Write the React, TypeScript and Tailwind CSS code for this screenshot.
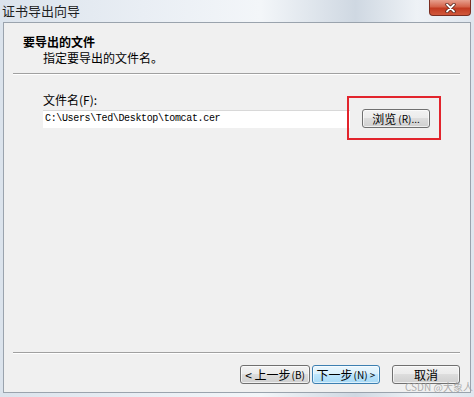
import React from "react";

const cjk = { fontFamily: '"Noto Sans CJK SC", "Liberation Sans", sans-serif' };

function Btn({ children, primary, w }: { children: React.ReactNode; primary?: boolean; w: string }) {
  return (
    <div
      className={`${w} h-[19px] rounded-[3px] border flex items-center justify-center text-[12px] leading-none text-black ${
        primary
          ? "border-[#3c7fb1] bg-[linear-gradient(#eaf6fd,#d9f0fc_50%,#bee6fd_50%,#a7d9f5)] shadow-[inset_0_0_0_1px_#ffffff99]"
          : "border-[#707070] bg-[linear-gradient(#f2f2f2,#ebebeb_50%,#dddddd_50%,#cfcfcf)] shadow-[inset_0_0_0_1px_#ffffffaa]"
      }`}
      style={cjk}
    >
      {children}
    </div>
  );
}

export default function App() {
  return (
    <div
      className="relative w-[474px] h-[397px] flex flex-col overflow-hidden bg-[linear-gradient(90deg,#dbe3ec,#e9eef4_30%,#f3f6f9_55%,#cfd8e2_75%,#eef2f6_88%,#dfe6ee)]"
      style={cjk}
    >
      {/* Title bar */}
      <div className="h-[22px] flex items-start justify-between shrink-0">
        <div className="pl-[2px] pt-[3px] text-[13px] leading-[16px] text-[#1e1e1e]">证书导出向导</div>
        <div className="mr-[3px] w-[42px] h-[16px] rounded-b-[4px] border border-t-0 border-[#7a2d20] bg-[linear-gradient(#e7a08e,#d4634a_45%,#c23b21_55%,#d0583c)] flex items-center justify-center">
          <svg width="11" height="10" viewBox="0 0 11 10">
            <path d="M2 1.5 L9 8.5 M9 1.5 L2 8.5" stroke="#4a1a10" strokeWidth="3.2" strokeLinecap="round" />
            <path d="M2 1.5 L9 8.5 M9 1.5 L2 8.5" stroke="#ffffff" strokeWidth="1.8" strokeLinecap="round" />
          </svg>
        </div>
      </div>

      {/* Body */}
      <div className="ml-[3px] mr-[3px] mb-[4px] flex-1 border border-[#9aa3ad] bg-[#f0f0f0] flex flex-col">
        {/* Header */}
        <div className="pt-[11px] shrink-0">
          <div className="pl-[19px] text-[12px] leading-[16px] font-bold text-black">要导出的文件</div>
          <div className="pl-[39px] text-[12px] leading-[16px] text-black">指定要导出的文件名。</div>
        </div>
        <div className="mt-[7px] ml-[9px] mr-[10px] border-t border-[#a0a0a0] border-b border-b-white" />

        {/* Content */}
        <div className="mt-[17px] pl-[39px] text-[12px] leading-[16px] text-black">文件名(F):</div>
        <div className="relative mt-[1px] pl-[39px] flex items-center">
          <div className="w-[307px] h-[18px] bg-white border-t border-[#d8d8d8] flex items-center pl-[2px]">
            <span
              className="text-[10px] leading-none tracking-[-0.35px] text-black"
              style={{ fontFamily: '"Liberation Mono", monospace' }}
            >
              C:\Users\Ted\Desktop\tomcat.cer
            </span>
          </div>
          <div className="ml-[12px]">
            <Btn w="w-[68px]">
              <span>浏览</span>
              <span className="text-[10px] ml-[2px]">(R)...</span>
            </Btn>
          </div>
          <div className="absolute left-[343px] top-[-13px] w-[94px] h-[44px] border-2 border-[#e2242c]" />
        </div>

        <div className="flex-1" />

        {/* Bottom separator */}
        <div className="ml-[9px] mr-[10px] border-t border-[#a0a0a0] border-b border-b-white" />
        <div className="h-[38px] flex items-start justify-end pr-[10px] pt-[11px]">
          <Btn w="w-[70px]">
            <span>&lt; 上一步</span>
            <span className="text-[10px] ml-[1px]">(B)</span>
          </Btn>
          <div className="ml-[2px]">
            <Btn w="w-[68px]" primary>
              <span>下一步</span>
              <span className="text-[10px] ml-[1px]">(N) &gt;</span>
            </Btn>
          </div>
          <div className="ml-[12px]">
            <Btn w="w-[68px]">取消</Btn>
          </div>
        </div>
      </div>

      {/* Watermark */}
      <div className="absolute left-[405px] top-[381px] text-[10px] leading-[12px] text-[#9a9a9a]/80">
        CSDN @大象人
      </div>
    </div>
  );
}
